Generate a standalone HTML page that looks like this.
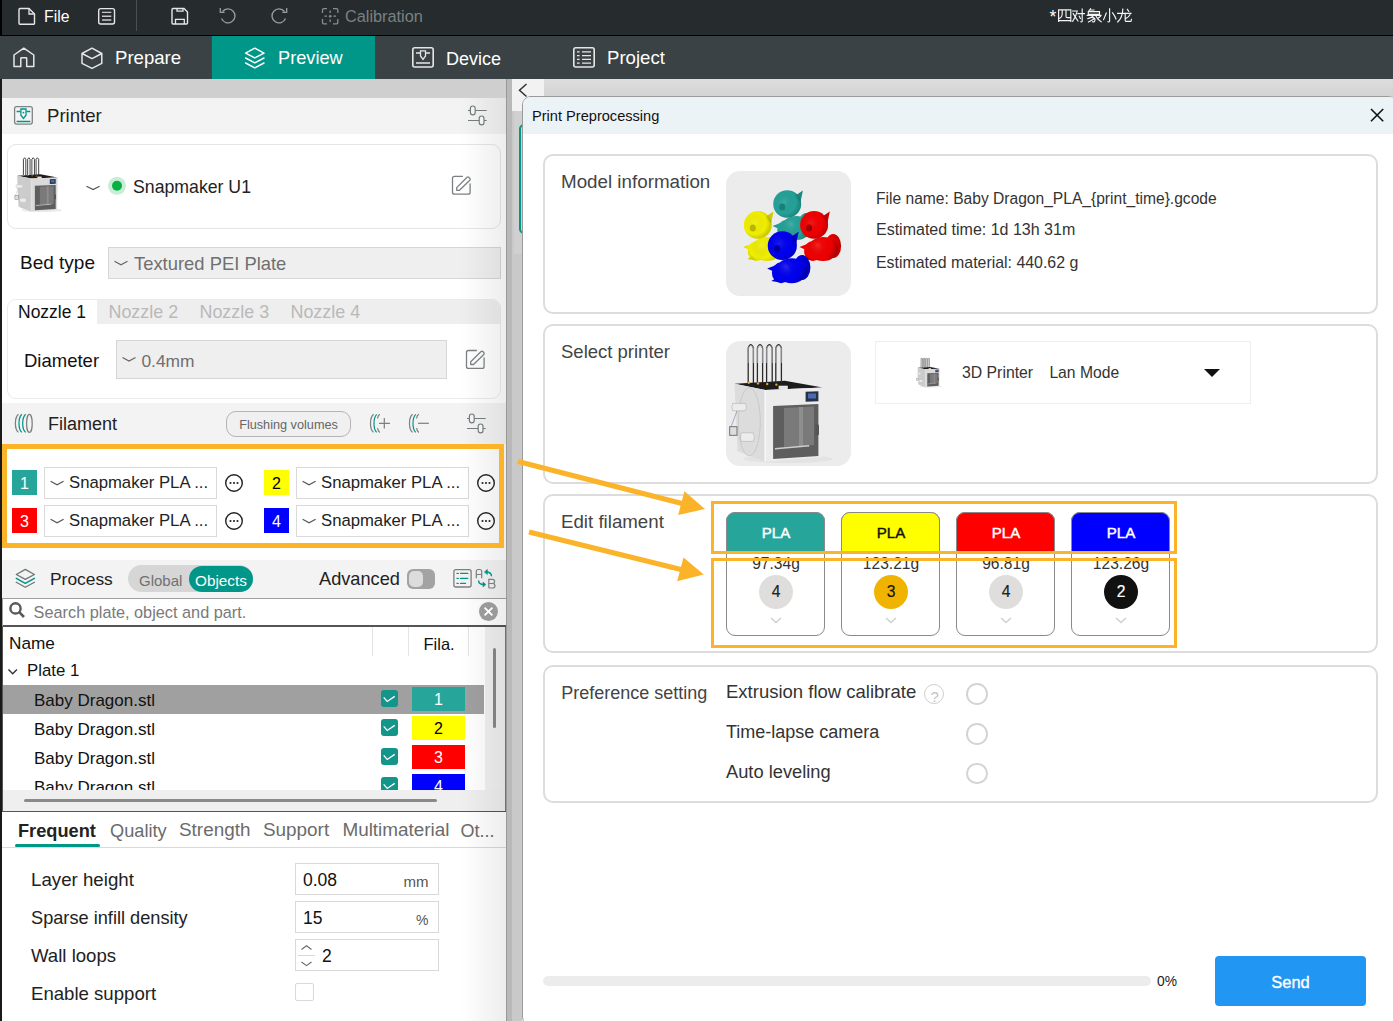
<!DOCTYPE html>
<html><head><meta charset="utf-8"><style>
*{margin:0;padding:0;box-sizing:border-box}
html,body{width:1393px;height:1021px;overflow:hidden}
body{position:relative;font-family:"Liberation Sans",sans-serif;background:#fff}
.a{position:absolute}
.t{position:absolute;line-height:1;white-space:nowrap}
</style></head><body>
<div class="a" style="left:0px;top:0px;width:1393px;height:35px;background:#262c2e"></div>
<div class="a" style="left:0px;top:35px;width:1393px;height:1px;background:#000"></div>
<div class="a" style="left:0px;top:0px;width:2px;height:35px;background:#000"></div>
<div class="a" style="left:0px;top:36px;width:1393px;height:43px;background:#3b4245"></div>
<div class="a" style="left:212px;top:36px;width:163px;height:43px;background:#009688"></div>
<div class="a" style="left:211px;top:36px;width:1px;height:43px;background:#454545"></div>
<div class="a" style="left:136px;top:0px;width:1px;height:31px;background:#4a4f51"></div>
<div class="t" style="left:44px;top:8.73px;font-size:15.8px;color:#fff;font-weight:normal;">File</div>
<div class="t" style="left:345px;top:7.80px;font-size:16.3px;color:#7b8081;font-weight:normal;">Calibration</div>
<div class="t" style="left:1049.5px;top:8.99px;font-size:17.5px;color:#fff;font-weight:normal;">*</div>
<div class="t" style="left:115px;top:49.06px;font-size:18.6px;color:#fff;font-weight:normal;">Prepare</div>
<div class="t" style="left:278px;top:49.39px;font-size:18.2px;color:#fff;font-weight:normal;">Preview</div>
<div class="t" style="left:446px;top:49.56px;font-size:18px;color:#fff;font-weight:normal;">Device</div>
<div class="t" style="left:607px;top:49.06px;font-size:18.6px;color:#fff;font-weight:normal;">Project</div>
<div class="a" style="left:0px;top:79px;width:506px;height:942px;background:#fff"></div>
<div class="a" style="left:0px;top:79px;width:2px;height:942px;background:#1a1a1a"></div>
<div class="a" style="left:2px;top:79px;width:504px;height:19px;background:#cfcfcf"></div>
<div class="a" style="left:506px;top:79px;width:1px;height:942px;background:#999"></div>
<div class="a" style="left:507px;top:79px;width:5px;height:942px;background:#b9b9b9"></div>
<div class="a" style="left:512px;top:79px;width:10px;height:942px;background:#c9c9c9"></div>
<div class="a" style="left:2px;top:98px;width:504px;height:36px;background:#f3f3f3"></div>
<div class="t" style="left:47px;top:107.06px;font-size:18.6px;color:#222;font-weight:normal;">Printer</div>
<div class="a" style="left:7px;top:144px;width:494px;height:85px;border:1px solid #e6e6e6;border-radius:9px;background:#fff"></div>
<div class="t" style="left:133px;top:178.82px;font-size:17.7px;color:#222;font-weight:normal;">Snapmaker U1</div>
<div class="t" style="left:20px;top:253.02px;font-size:19px;color:#111;font-weight:normal;">Bed type</div>
<div class="a" style="left:108px;top:247px;width:393px;height:32px;background:#efefef;border:1px solid #d6d6d6"></div>
<div class="t" style="left:134px;top:254.72px;font-size:18.4px;color:#707070;font-weight:normal;">Textured PEI Plate</div>
<div class="a" style="left:7px;top:299px;width:494px;height:100px;border:1px solid #ebebeb;border-radius:9px;background:#fff"></div>
<div class="a" style="left:97px;top:300px;width:403px;height:24px;background:#eeeeee;border-top-right-radius:8px"></div>
<div class="t" style="left:18px;top:303.99px;font-size:17.5px;color:#111;font-weight:normal;">Nozzle 1</div>
<div class="t" style="left:108.5px;top:303.65px;font-size:17.9px;color:#b9b9b9;font-weight:normal;">Nozzle 2</div>
<div class="t" style="left:199.5px;top:303.65px;font-size:17.9px;color:#b9b9b9;font-weight:normal;">Nozzle 3</div>
<div class="t" style="left:290.5px;top:303.65px;font-size:17.9px;color:#b9b9b9;font-weight:normal;">Nozzle 4</div>
<div class="t" style="left:24px;top:352.14px;font-size:18.5px;color:#111;font-weight:normal;">Diameter</div>
<div class="a" style="left:116px;top:340px;width:331px;height:39px;background:#efefef;border:1px solid #d6d6d6"></div>
<div class="t" style="left:141.4px;top:353.07px;font-size:17.4px;color:#707070;font-weight:normal;">0.4mm</div>
<div class="a" style="left:2px;top:403px;width:504px;height:41px;background:#f3f3f3"></div>
<div class="t" style="left:48px;top:415.06px;font-size:18px;color:#222;font-weight:normal;">Filament</div>
<div class="a" style="left:226px;top:411px;width:125px;height:26px;background:#f0f0f0;border:1px solid #b4b4b4;border-radius:10px"></div>
<div class="t" style="left:-11.5px;width:600px;text-align:center;top:418.55px;font-size:12.7px;color:#666;font-weight:normal;">Flushing volumes</div>
<div class="a" style="left:2px;top:444px;width:502px;height:104px;border:5px solid #fbb32a"></div>
<div class="a" style="left:12px;top:470px;width:25px;height:25px;background:#26a69a"></div>
<div class="t" style="left:-275.5px;width:600px;text-align:center;top:476.26px;font-size:16px;color:#fff;font-weight:normal;">1</div>
<div class="a" style="left:44px;top:467px;width:173px;height:32px;background:#fff;border:1px solid #d9d9d9"></div>
<div class="t" style="left:69px;top:475.26px;font-size:16.7px;color:#222;font-weight:normal;">Snapmaker PLA ...</div>
<div class="a" style="left:264px;top:470px;width:25px;height:25px;background:#ffff00"></div>
<div class="t" style="left:-23.5px;width:600px;text-align:center;top:476.26px;font-size:16px;color:#000;font-weight:normal;">2</div>
<div class="a" style="left:296px;top:467px;width:173px;height:32px;background:#fff;border:1px solid #d9d9d9"></div>
<div class="t" style="left:321px;top:475.26px;font-size:16.7px;color:#222;font-weight:normal;">Snapmaker PLA ...</div>
<div class="a" style="left:12px;top:508px;width:25px;height:25px;background:#ff0000"></div>
<div class="t" style="left:-275.5px;width:600px;text-align:center;top:514.26px;font-size:16px;color:#fff;font-weight:normal;">3</div>
<div class="a" style="left:44px;top:505px;width:173px;height:32px;background:#fff;border:1px solid #d9d9d9"></div>
<div class="t" style="left:69px;top:513.26px;font-size:16.7px;color:#222;font-weight:normal;">Snapmaker PLA ...</div>
<div class="a" style="left:264px;top:508px;width:25px;height:25px;background:#0000ff"></div>
<div class="t" style="left:-23.5px;width:600px;text-align:center;top:514.26px;font-size:16px;color:#fff;font-weight:normal;">4</div>
<div class="a" style="left:296px;top:505px;width:173px;height:32px;background:#fff;border:1px solid #d9d9d9"></div>
<div class="t" style="left:321px;top:513.26px;font-size:16.7px;color:#222;font-weight:normal;">Snapmaker PLA ...</div>
<div class="a" style="left:2px;top:560px;width:504px;height:38px;background:#f3f3f3"></div>
<div class="a" style="left:2px;top:598px;width:504px;height:1px;background:#a0a0a4"></div>
<div class="t" style="left:50px;top:570.67px;font-size:17.4px;color:#222;font-weight:normal;">Process</div>
<div class="a" style="left:128px;top:565px;width:125px;height:27px;background:#d6d6d6;border-radius:14px"></div>
<div class="a" style="left:189px;top:566px;width:64px;height:26px;background:#009688;border-radius:13px"></div>
<div class="t" style="left:139px;top:573.10px;font-size:15px;color:#707070;font-weight:normal;">Global</div>
<div class="t" style="left:195px;top:572.85px;font-size:15.3px;color:#fff;font-weight:normal;">Objects</div>
<div class="t" style="left:319px;top:570.39px;font-size:18.2px;color:#222;font-weight:normal;">Advanced</div>
<div class="a" style="left:407px;top:569px;width:28px;height:20px;background:#a3a3a3;border-radius:6px"></div>
<div class="a" style="left:409px;top:571px;width:14px;height:16px;background:#dcdcdc;border-radius:5px"></div>
<div class="a" style="left:2px;top:599px;width:504px;height:27px;background:#fff"></div>
<div class="a" style="left:2px;top:625px;width:504px;height:2px;background:#555"></div>
<div class="t" style="left:33.6px;top:604.00px;font-size:16.3px;color:#7a7a7a;font-weight:normal;">Search plate, object and part.</div>
<div class="a" style="left:2px;top:627px;width:504px;height:184px;background:#fff"></div>
<div class="a" style="left:505px;top:627px;width:1px;height:184px;background:#777"></div>
<div class="t" style="left:9px;top:635.24px;font-size:17.2px;color:#111;font-weight:normal;">Name</div>
<div class="t" style="left:423.5px;top:635.83px;font-size:16.5px;color:#111;font-weight:normal;">Fila.</div>
<div class="a" style="left:372px;top:627px;width:1px;height:29px;background:#e4e4e4"></div>
<div class="a" style="left:408px;top:627px;width:1px;height:29px;background:#e4e4e4"></div>
<div class="a" style="left:468px;top:627px;width:1px;height:29px;background:#e4e4e4"></div>
<div class="t" style="left:27px;top:663.18px;font-size:16.8px;color:#111;font-weight:normal;">Plate 1</div>
<div class="a" style="left:3px;top:685px;width:481px;height:29px;background:#a0a0a0"></div>
<div class="t" style="left:34px;top:692.41px;font-size:17px;color:#111;font-weight:normal;">Baby Dragon.stl</div>
<div class="t" style="left:34px;top:721.41px;font-size:17px;color:#111;font-weight:normal;">Baby Dragon.stl</div>
<div class="t" style="left:34px;top:750.41px;font-size:17px;color:#111;font-weight:normal;">Baby Dragon.stl</div>
<div class="t" style="left:34px;top:779.41px;font-size:17px;color:#111;font-weight:normal;">Baby Dragon.stl</div>
<div class="a" style="left:381px;top:690px;width:17px;height:17px;background:#13958a;border-radius:3px"></div>
<div class="a" style="left:412px;top:687px;width:53px;height:24px;background:#26a69a"></div>
<div class="t" style="left:138.5px;width:600px;text-align:center;top:692.26px;font-size:16px;color:#fff;font-weight:normal;">1</div>
<div class="a" style="left:381px;top:719px;width:17px;height:17px;background:#13958a;border-radius:3px"></div>
<div class="a" style="left:412px;top:716px;width:53px;height:24px;background:#ffff00"></div>
<div class="t" style="left:138.5px;width:600px;text-align:center;top:721.26px;font-size:16px;color:#000;font-weight:normal;">2</div>
<div class="a" style="left:381px;top:748px;width:17px;height:17px;background:#13958a;border-radius:3px"></div>
<div class="a" style="left:412px;top:745px;width:53px;height:24px;background:#ff0000"></div>
<div class="t" style="left:138.5px;width:600px;text-align:center;top:750.26px;font-size:16px;color:#fff;font-weight:normal;">3</div>
<div class="a" style="left:381px;top:777px;width:17px;height:17px;background:#13958a;border-radius:3px"></div>
<div class="a" style="left:412px;top:774px;width:53px;height:24px;background:#0000ff"></div>
<div class="t" style="left:138.5px;width:600px;text-align:center;top:779.26px;font-size:16px;color:#fff;font-weight:normal;">4</div>
<div class="a" style="left:485px;top:627px;width:20px;height:163px;background:#f0f0f0"></div>
<div class="a" style="left:3px;top:790px;width:502px;height:21px;background:#efefef"></div>
<div class="a" style="left:24px;top:799px;width:413px;height:3px;background:#8a8a8a;border-radius:2px"></div>
<div class="a" style="left:493px;top:648px;width:3px;height:80px;background:#888;border-radius:2px"></div>
<div class="a" style="left:2px;top:811px;width:504px;height:1px;background:#555"></div>
<div class="a" style="left:2px;top:598px;width:1px;height:28px;background:#a0a0a4"></div>
<div class="a" style="left:2px;top:626px;width:1px;height:186px;background:#555"></div>
<div class="t" style="left:18px;top:821.99px;font-size:18.2px;color:#222;font-weight:bold;">Frequent</div>
<div class="t" style="left:110px;top:821.99px;font-size:18.2px;color:#6b6b6b;font-weight:normal;">Quality</div>
<div class="t" style="left:179px;top:821.40px;font-size:18.9px;color:#6b6b6b;font-weight:normal;">Strength</div>
<div class="t" style="left:263px;top:821.40px;font-size:18.9px;color:#6b6b6b;font-weight:normal;">Support</div>
<div class="t" style="left:342.4px;top:821.40px;font-size:18.9px;color:#6b6b6b;font-weight:normal;">Multimaterial</div>
<div class="t" style="left:460.5px;top:822.16px;font-size:18px;color:#6b6b6b;font-weight:normal;">Ot...</div>
<div class="a" style="left:15px;top:844px;width:85px;height:3px;background:#009688;border-radius:2px"></div>
<div class="a" style="left:2px;top:847px;width:504px;height:1px;background:#d9d9d9"></div>
<div class="t" style="left:31px;top:870.77px;font-size:18.7px;color:#222;font-weight:normal;">Layer height</div>
<div class="a" style="left:295px;top:863px;width:144px;height:32px;background:#fff;border:1px solid #d9d9d9"></div>
<div class="t" style="left:303px;top:871.79px;font-size:17.5px;color:#111;font-weight:normal;">0.08</div>
<div class="t" style="right:964.5px;top:874.40px;font-size:15px;color:#555;font-weight:normal;">mm</div>
<div class="t" style="left:31px;top:909.19px;font-size:18.2px;color:#222;font-weight:normal;">Sparse infill density</div>
<div class="a" style="left:295px;top:901px;width:144px;height:32px;background:#fff;border:1px solid #d9d9d9"></div>
<div class="t" style="left:303px;top:909.79px;font-size:17.5px;color:#111;font-weight:normal;">15</div>
<div class="t" style="right:964.5px;top:913.25px;font-size:14px;color:#555;font-weight:normal;">%</div>
<div class="t" style="left:31px;top:946.86px;font-size:18.6px;color:#222;font-weight:normal;">Wall loops</div>
<div class="a" style="left:295px;top:939px;width:144px;height:32px;background:#fff;border:1px solid #d9d9d9"></div>
<div class="t" style="left:322px;top:947.79px;font-size:17.5px;color:#111;font-weight:normal;">2</div>
<div class="t" style="left:31px;top:984.86px;font-size:18.6px;color:#222;font-weight:normal;">Enable support</div>
<div class="a" style="left:295px;top:983px;width:19px;height:18px;border:1px solid #d9d9d9;border-radius:2px"></div>
<div class="a" style="left:512px;top:79px;width:881px;height:18px;background:linear-gradient(#dedede,#d2d2d2)"></div>
<div class="a" style="left:512px;top:79px;width:32px;height:32px;background:#f2f2f2"></div>
<div class="a" style="left:514px;top:111px;width:8px;height:143px;background:#d0d0d0"></div>
<div class="a" style="left:519px;top:124px;width:10px;height:110px;border:2px solid #009688;border-radius:5px"></div>
<svg class="a" style="left:512px;top:79px;" width="30" height="25" viewBox="0 0 30 25"><path d="M14.5 5L7.5 11.2L14.5 17.5M18 17.5L21.2 20.5" stroke="#333" stroke-width="1.5" fill="none"/></svg>
<div class="a" style="left:461px;top:98px;width:45px;height:923px;background:linear-gradient(to right,rgba(0,0,0,0),rgba(0,0,0,0.07))"></div>
<div class="a" style="left:2px;top:444px;width:502px;height:104px;border:5px solid #fbb32a"></div>
<div class="a" style="left:522px;top:96px;width:875px;height:930px;background:#fff;border-radius:9px;border:1px solid #9a9a9a;overflow:hidden"></div>
<div class="a" style="left:523px;top:97px;width:874px;height:37px;background:#ecf3f7;border-radius:8px 8px 0 0"></div>
<div class="t" style="left:532px;top:109.44px;font-size:14.6px;color:#111;font-weight:normal;">Print Preprocessing</div>
<div class="a" style="left:543px;top:154px;width:835px;height:160px;border:2.5px solid #dcdcdc;border-radius:10px;background:#fff"></div>
<div class="a" style="left:543px;top:324px;width:835px;height:160px;border:2.5px solid #dcdcdc;border-radius:10px;background:#fff"></div>
<div class="a" style="left:543px;top:494px;width:835px;height:159px;border:2.5px solid #dcdcdc;border-radius:10px;background:#fff"></div>
<div class="a" style="left:543px;top:665px;width:835px;height:138px;border:2.5px solid #dcdcdc;border-radius:10px;background:#fff"></div>
<div class="t" style="left:561px;top:172.89px;font-size:18.8px;color:#444;font-weight:normal;">Model information</div>
<div class="t" style="left:561px;top:343.34px;font-size:18.5px;color:#444;font-weight:normal;">Select printer</div>
<div class="t" style="left:561px;top:512.67px;font-size:18.7px;color:#444;font-weight:normal;">Edit filament</div>
<div class="t" style="left:561.3px;top:683.56px;font-size:18px;color:#444;font-weight:normal;">Preference setting</div>
<div class="a" style="left:726px;top:171px;width:125px;height:125px;background:#ececec;border-radius:14px"></div>
<div class="t" style="left:876px;top:190.99px;font-size:15.6px;color:#333;font-weight:normal;">File name: Baby Dragon_PLA_{print_time}.gcode</div>
<div class="t" style="left:876px;top:222.26px;font-size:16px;color:#333;font-weight:normal;">Estimated time: 1d 13h 31m</div>
<div class="t" style="left:876px;top:255.04px;font-size:15.9px;color:#333;font-weight:normal;">Estimated material: 440.62 g</div>
<div class="a" style="left:726px;top:341px;width:125px;height:125px;background:#ececec;border-radius:14px"></div>
<div class="a" style="left:875px;top:341px;width:376px;height:63px;border:1px solid #eeeeee"></div>
<div class="t" style="left:962px;top:364.93px;font-size:15.8px;color:#333;font-weight:normal;">3D Printer</div>
<div class="t" style="left:1049.4px;top:365.01px;font-size:15.7px;color:#333;font-weight:normal;">Lan Mode</div>
<svg class="a" style="left:1204px;top:369px;" width="16" height="8" viewBox="0 0 16 8"><path d="M0 0H16L8 8Z" fill="#111"/></svg>
<div class="a" style="left:726px;top:512px;width:99px;height:124px;border:1px solid #8a8a8a;border-radius:9px;background:#fff;overflow:hidden"></div>
<div class="a" style="left:726px;top:512px;width:99px;height:40px;background:#26a69a;border:1px solid #8a8a8a;border-bottom:none;border-radius:9px 9px 0 0"></div>
<div class="t" style="left:476px;width:600px;text-align:center;top:524.70px;font-size:15px;color:#fff;font-weight:normal;-webkit-text-stroke:0.45px #fff">PLA</div>
<div class="t" style="left:476px;width:600px;text-align:center;top:555.59px;font-size:15.6px;color:#333;font-weight:normal;">97.34g</div>
<div class="a" style="left:758.5px;top:575px;width:34px;height:34px;background:#e0dedd;border-radius:50%"></div>
<div class="t" style="left:476px;width:600px;text-align:center;top:584.19px;font-size:15.6px;color:#222;font-weight:normal;-webkit-text-stroke:0.2px #222">4</div>
<svg class="a" style="left:770px;top:617px;" width="12" height="7" viewBox="0 0 12 7"><path d="M1 1L6 5.5L11 1" stroke="#d0d0d0" stroke-width="1.6" fill="none"/></svg>
<div class="a" style="left:841px;top:512px;width:99px;height:124px;border:1px solid #8a8a8a;border-radius:9px;background:#fff;overflow:hidden"></div>
<div class="a" style="left:841px;top:512px;width:99px;height:40px;background:#ffff00;border:1px solid #8a8a8a;border-bottom:none;border-radius:9px 9px 0 0"></div>
<div class="t" style="left:591px;width:600px;text-align:center;top:524.70px;font-size:15px;color:#111;font-weight:normal;-webkit-text-stroke:0.45px #111">PLA</div>
<div class="t" style="left:591px;width:600px;text-align:center;top:555.59px;font-size:15.6px;color:#333;font-weight:normal;">123.21g</div>
<div class="a" style="left:873.5px;top:575px;width:34px;height:34px;background:#f0b400;border-radius:50%"></div>
<div class="t" style="left:591px;width:600px;text-align:center;top:584.19px;font-size:15.6px;color:#111;font-weight:normal;-webkit-text-stroke:0.2px #111">3</div>
<svg class="a" style="left:885px;top:617px;" width="12" height="7" viewBox="0 0 12 7"><path d="M1 1L6 5.5L11 1" stroke="#d0d0d0" stroke-width="1.6" fill="none"/></svg>
<div class="a" style="left:956px;top:512px;width:99px;height:124px;border:1px solid #8a8a8a;border-radius:9px;background:#fff;overflow:hidden"></div>
<div class="a" style="left:956px;top:512px;width:99px;height:40px;background:#ff0000;border:1px solid #8a8a8a;border-bottom:none;border-radius:9px 9px 0 0"></div>
<div class="t" style="left:706px;width:600px;text-align:center;top:524.70px;font-size:15px;color:#fff;font-weight:normal;-webkit-text-stroke:0.45px #fff">PLA</div>
<div class="t" style="left:706px;width:600px;text-align:center;top:555.59px;font-size:15.6px;color:#333;font-weight:normal;">96.81g</div>
<div class="a" style="left:988.5px;top:575px;width:34px;height:34px;background:#e0dedd;border-radius:50%"></div>
<div class="t" style="left:706px;width:600px;text-align:center;top:584.19px;font-size:15.6px;color:#222;font-weight:normal;-webkit-text-stroke:0.2px #222">4</div>
<svg class="a" style="left:1000px;top:617px;" width="12" height="7" viewBox="0 0 12 7"><path d="M1 1L6 5.5L11 1" stroke="#d0d0d0" stroke-width="1.6" fill="none"/></svg>
<div class="a" style="left:1071px;top:512px;width:99px;height:124px;border:1px solid #8a8a8a;border-radius:9px;background:#fff;overflow:hidden"></div>
<div class="a" style="left:1071px;top:512px;width:99px;height:40px;background:#0000ff;border:1px solid #8a8a8a;border-bottom:none;border-radius:9px 9px 0 0"></div>
<div class="t" style="left:821px;width:600px;text-align:center;top:524.70px;font-size:15px;color:#fff;font-weight:normal;-webkit-text-stroke:0.45px #fff">PLA</div>
<div class="t" style="left:821px;width:600px;text-align:center;top:555.59px;font-size:15.6px;color:#333;font-weight:normal;">123.26g</div>
<div class="a" style="left:1103.5px;top:575px;width:34px;height:34px;background:#111;border-radius:50%"></div>
<div class="t" style="left:821px;width:600px;text-align:center;top:584.19px;font-size:15.6px;color:#fff;font-weight:normal;-webkit-text-stroke:0.2px #fff">2</div>
<svg class="a" style="left:1115px;top:617px;" width="12" height="7" viewBox="0 0 12 7"><path d="M1 1L6 5.5L11 1" stroke="#d0d0d0" stroke-width="1.6" fill="none"/></svg>
<div class="a" style="left:711px;top:501px;width:466px;height:53px;border:3px solid #fbb32a"></div>
<div class="a" style="left:711px;top:558px;width:466px;height:90px;border:3px solid #fbb32a"></div>
<div class="t" style="left:726px;top:683.34px;font-size:18.5px;color:#333;font-weight:normal;">Extrusion flow calibrate</div>
<div class="a" style="left:966px;top:683.3px;width:21.5px;height:21.5px;border:2px solid #d4d4d4;border-radius:50%"></div>
<div class="t" style="left:726px;top:723.36px;font-size:18px;color:#333;font-weight:normal;">Time-lapse camera</div>
<div class="a" style="left:966px;top:723.0px;width:21.5px;height:21.5px;border:2px solid #d4d4d4;border-radius:50%"></div>
<div class="t" style="left:726px;top:762.71px;font-size:18.3px;color:#333;font-weight:normal;">Auto leveling</div>
<div class="a" style="left:966px;top:762.6999999999999px;width:21.5px;height:21.5px;border:2px solid #d4d4d4;border-radius:50%"></div>
<div class="a" style="left:924.4px;top:684.4px;width:20px;height:20px;border:1.5px solid #cfcfcf;border-radius:50%"></div>
<div class="t" style="left:634.6px;width:600px;text-align:center;top:688.60px;font-size:15px;color:#c4c4c4;font-weight:normal;">?</div>
<div class="a" style="left:543px;top:976px;width:608px;height:10px;background:#ececec;border-radius:5px"></div>
<div class="t" style="left:1157px;top:975.42px;font-size:13.8px;color:#222;font-weight:normal;">0%</div>
<div class="a" style="left:1215px;top:956px;width:151px;height:50px;background:#2196f3;border-radius:4px"></div>
<div class="t" style="left:990.5px;width:600px;text-align:center;top:974.43px;font-size:16.5px;color:#fff;font-weight:normal;-webkit-text-stroke:0.35px #fff">Send</div>
<svg class="a" style="left:0px;top:0px;" width="1393" height="1021" viewBox="0 0 1393 1021"><g stroke="#fbb32a" stroke-width="5" fill="none"><path d="M518 461.5L684 504"/><path d="M529 532L683 570"/></g>
<path d="M705 509L684.4 491.2L678.2 514.9Z" fill="#fbb32a"/><path d="M703.7 574.6L683.5 557.5L677.1 581.2Z" fill="#fbb32a"/></svg>
<svg class="a" style="left:0;top:0" width="1393" height="1021" viewBox="0 0 1393 1021"><path d="M19 9.5Q19 8.5 20 8.5H29L34.5 14V23.5Q34.5 24.2 33.8 24.2H20Q19 24.2 19 23.3Z" stroke="#e6e6e6" stroke-width="1.4" fill="none" stroke-linejoin="round"/><path d="M29 8.5V14H34.5" stroke="#e6e6e6" stroke-width="1.3" fill="none"/><rect x="98.7" y="8.6" width="15.8" height="15.4" rx="2" stroke="#e6e6e6" stroke-width="1.4" fill="none"/><path d="M102 12.4H111.3M102 16.2H111.3M102 20H111.3" stroke="#c8c8c8" stroke-width="1.4"/><path d="M172 9.5Q172 8.5 173 8.5H184L187.5 12V23Q187.5 24 186.5 24H173Q172 24 172 23Z" stroke="#e6e6e6" stroke-width="1.4" fill="none"/><path d="M177 8.8V11.2H183V8.8M175.5 24V19.3H184.3V24" stroke="#e6e6e6" stroke-width="1.3" fill="none"/><path d="M221.5 18.5A7 7 0 1 0 222.5 11.5" stroke="#9a9c9c" stroke-width="1.3" fill="none"/><path d="M220.3 8V12.3H224.6" stroke="#9a9c9c" stroke-width="1.3" fill="none"/><path d="M285.5 18.5A7 7 0 1 1 284.5 11.5" stroke="#9a9c9c" stroke-width="1.3" fill="none"/><path d="M286.7 8V12.3H282.4" stroke="#9a9c9c" stroke-width="1.3" fill="none"/><g stroke="#8a8d8e" stroke-width="1.3" fill="none"><path d="M322.5 13V9.8Q322.5 8.6 323.7 8.6H327M333 8.6H336.5Q337.8 8.6 337.8 9.8V13M337.8 19V22.6Q337.8 23.8 336.5 23.8H333M327 23.8H323.7Q322.5 23.8 322.5 22.6V19"/><path d="M330.2 10.5V13M330.2 19.5V22M324.5 16.2H327M333.4 16.2H336"/></g><circle cx="330.2" cy="16.2" r="1.3" fill="#8a8d8e"/><path d="M14 55L23.8 48.2L33.8 55V66.4H26.7V58.5Q26.7 57.8 26 57.8H21.5Q20.8 57.8 20.8 58.5V66.4H14Z" stroke="#e6e6e6" stroke-width="1.5" fill="none" stroke-linejoin="round"/><path d="M92 48.2L101.8 53.5V63.3L92 68.4L82 63.3V53.5Z M82 53.5L92 58.6L101.8 53.5" stroke="#e6e6e6" stroke-width="1.5" fill="none" stroke-linejoin="round"/><path d="M254.8 48.2L264 53.1L254.8 57.9L245.6 53.1Z M245.6 58L254.8 62.9L264 58 M245.6 63L254.8 67.9L264 63" stroke="#fff" stroke-width="1.5" fill="none" stroke-linejoin="round" stroke-linecap="round"/><rect x="412.8" y="47.8" width="20.4" height="19.2" rx="2" stroke="#e6e6e6" stroke-width="1.6" fill="none"/><path d="M416 53H420.2M425.8 53H430M416 63H430" stroke="#e6e6e6" stroke-width="1.5"/><path d="M420.5 50.8H425.5V56L423 59.5L420.5 56Z" stroke="#e6e6e6" stroke-width="1.3" fill="none"/><rect x="573.8" y="47.8" width="20.4" height="19.2" rx="2" stroke="#e6e6e6" stroke-width="1.6" fill="none"/><path d="M577 51.8H579.6M582 51.8H591M577 55.6H579.6M582 55.6H591M577 59.4H579.6M582 59.4H591M577 63.1H579.6M582 63.1H591" stroke="#e6e6e6" stroke-width="1.3"/><rect x="14.6" y="106.6" width="17.7" height="17.5" rx="2" stroke="#7d8485" stroke-width="1.3" fill="none"/><path d="M16.6 111.5H20.5M26.5 111.5H30.3M16.6 121.5H30.3" stroke="#009688" stroke-width="1.3"/><path d="M20.9 109H26V115.2L23.45 118.5L20.9 115.2Z" stroke="#009688" stroke-width="1.3" fill="none"/><circle cx="23.45" cy="112.6" r="0.9" fill="#009688"/><g stroke="#737b7c" stroke-width="1.2" fill="none"><path d="M468 110.5H486.7M468 120.5H486.7"/><rect x="470.4" y="106" width="4.8" height="8.8" rx="2.4" fill="#f3f3f3"/><rect x="479.2" y="116" width="4.8" height="8.8" rx="2.4" fill="#f3f3f3"/></g><g stroke="#737b7c" stroke-width="1.2" fill="none"><path d="M467 418.5H485.7M467 428.5H485.7"/><rect x="469.4" y="414" width="4.8" height="8.8" rx="2.4" fill="#f3f3f3"/><rect x="478.2" y="424" width="4.8" height="8.8" rx="2.4" fill="#f3f3f3"/></g><path d="M86.5 186.2L93.1 189.6L99.6 186.2" stroke="#555" stroke-width="1.2" fill="none"/><circle cx="117" cy="185.8" r="9" fill="#c9ecd6"/><circle cx="117" cy="185.8" r="5" fill="#06b044"/><g stroke="#7a8081" stroke-width="1.3" fill="none" stroke-linejoin="round"><path d="M462.9 176.3H454.5Q452.5 176.3 452.5 178.3V192.20000000000002Q452.5 194.20000000000002 454.5 194.20000000000002H468.1Q470.1 194.20000000000002 470.1 192.20000000000002V183.4"/><path d="M456.7 190.3V187.60000000000002L467.1 177.3Q468.0 176.5 468.9 177.3L469.9 178.5Q470.6 179.4 469.8 180.3L459.5 190.3Z"/></g><g stroke="#7a8081" stroke-width="1.3" fill="none" stroke-linejoin="round"><path d="M476.9 350.5H468.5Q466.5 350.5 466.5 352.5V366.4Q466.5 368.4 468.5 368.4H482.1Q484.1 368.4 484.1 366.4V357.6"/><path d="M470.7 364.5V361.8L481.1 351.5Q482.0 350.7 482.9 351.5L483.9 352.7Q484.6 353.6 483.8 354.5L473.5 364.5Z"/></g><path d="M114.5 261.3L121.0 264.8L127.5 261.3" stroke="#666" stroke-width="1.2" fill="none"/><path d="M122.5 357.5L129.0 361.0L135.5 357.5" stroke="#666" stroke-width="1.2" fill="none"/><path d="M50.6 481.2L57.1 484.7L63.6 481.2" stroke="#555" stroke-width="1.2" fill="none"/><path d="M302.6 481.2L309.1 484.7L315.6 481.2" stroke="#555" stroke-width="1.2" fill="none"/><path d="M50.6 519.2L57.1 522.7L63.6 519.2" stroke="#555" stroke-width="1.2" fill="none"/><path d="M302.6 519.2L309.1 522.7L315.6 519.2" stroke="#555" stroke-width="1.2" fill="none"/><circle cx="234" cy="483" r="8.3" stroke="#222" stroke-width="1.4" fill="none"/><circle cx="230.5" cy="483" r="1.05" fill="#222"/><circle cx="234" cy="483" r="1.05" fill="#222"/><circle cx="237.5" cy="483" r="1.05" fill="#222"/><circle cx="486" cy="483" r="8.3" stroke="#222" stroke-width="1.4" fill="none"/><circle cx="482.5" cy="483" r="1.05" fill="#222"/><circle cx="486" cy="483" r="1.05" fill="#222"/><circle cx="489.5" cy="483" r="1.05" fill="#222"/><circle cx="234" cy="521" r="8.3" stroke="#222" stroke-width="1.4" fill="none"/><circle cx="230.5" cy="521" r="1.05" fill="#222"/><circle cx="234" cy="521" r="1.05" fill="#222"/><circle cx="237.5" cy="521" r="1.05" fill="#222"/><circle cx="486" cy="521" r="8.3" stroke="#222" stroke-width="1.4" fill="none"/><circle cx="482.5" cy="521" r="1.05" fill="#222"/><circle cx="486" cy="521" r="1.05" fill="#222"/><circle cx="489.5" cy="521" r="1.05" fill="#222"/><g stroke-width="1.25" fill="none"><path d="M18.4 414.3Q15.4 417 15.4 423.4Q15.4 429.8 18.4 432.4" stroke="#7a7f80"/><path d="M21.8 414.3Q19 417 19 423.4Q19 429.8 21.8 432.4" stroke="#009688"/><path d="M25.6 414.3Q22.7 417 22.7 423.4Q22.7 429.8 25.6 432.4" stroke="#009688"/><ellipse cx="29.4" cy="423.4" rx="2.8" ry="9" stroke="#7a7f80"/></g><g stroke-width="1.2" fill="none"><path d="M373.5 414.3Q370.5 417 370.5 423.4Q370.5 429.8 373.5 432.4" stroke="#7a7f80"/><path d="M376.7 414.3Q374 417 374 423.4Q374 429.8 376.7 432.4" stroke="#009688"/><path d="M379.8 414.3Q377.8 415.5 377.6 418.5M377.6 428Q377.8 431 379.8 432.4" stroke="#7a7f80"/><path d="M379 423.3H389.9M384.3 418V428.6" stroke="#7a7f80"/></g><g stroke-width="1.2" fill="none"><path d="M412.5 414.3Q409.5 417 409.5 423.4Q409.5 429.8 412.5 432.4" stroke="#7a7f80"/><path d="M415.7 414.3Q413 417 413 423.4Q413 429.8 415.7 432.4" stroke="#009688"/><path d="M418.8 414.3Q416.8 415.5 416.6 418.5M416.6 428Q416.8 431 418.8 432.4" stroke="#7a7f80"/><path d="M418 423.3H428.9" stroke="#7a7f80"/></g><g stroke-width="1.3" fill="none" stroke-linejoin="round" stroke-linecap="round"><path d="M25.3 569.4L34.4 574.5L25.3 579.4L16.3 574.5Z" stroke="#6f7677"/><path d="M16.3 578.3L25.3 583.3L34.4 578.3" stroke="#009688" stroke-width="1.5"/><path d="M16.3 582.2L25.3 587.2L34.4 582.2" stroke="#6f7677"/></g><rect x="453.9" y="569.6" width="17.2" height="17.4" rx="2" stroke="#7a7f80" stroke-width="1.3" fill="none"/><g stroke="#009688" stroke-width="1.3" stroke-linecap="round"><path d="M457 573.4H458.2M460.5 573.4H467.8M457 578.4H458.2M460.5 578.4H467.8M457 583.4H458.2M460.5 583.4H465.5"/></g><path d="M476.3 578.2V571.5Q476.3 569.5 478.3 569.5H479.7Q481.7 569.5 481.7 571.5V578.2M476.3 574.5H481.7" stroke="#7a7f80" stroke-width="1.2" fill="none"/><path d="M488.8 588V579.4H492.5Q494.6 579.4 494.6 581.4Q494.6 583.5 492.5 583.5H488.8M492.5 583.5Q495 583.5 495 585.8Q495 588 492.5 588H488.8" stroke="#7a7f80" stroke-width="1.2" fill="none"/><path d="M491.5 576.2Q491.5 572 486 572" stroke="#009688" stroke-width="1.4" fill="none"/><path d="M484.5 572L487.3 569.6V574.4Z" fill="#009688" stroke="#009688" stroke-width="0.8"/><path d="M478.6 580.5Q478.6 584.5 484 584.5" stroke="#009688" stroke-width="1.4" fill="none"/><path d="M485.8 584.5L483 582.2V586.8Z" fill="#009688" stroke="#009688" stroke-width="0.8"/><circle cx="15.5" cy="608.4" r="5.1" stroke="#595959" stroke-width="2.4" fill="none"/><path d="M19.2 612.2L24 617" stroke="#595959" stroke-width="2.6"/><circle cx="488.5" cy="611.5" r="9.5" fill="#9a9a9a"/><path d="M484.6 607.6L492.4 615.4M492.4 607.6L484.6 615.4" stroke="#fff" stroke-width="1.8"/><path d="M8.5 669.5L12.7 673.8L16.9 669.5" stroke="#333" stroke-width="1.4" fill="none"/><path d="M383.7 697.4L387.2 701.5L394.7 696.4" stroke="#fff" stroke-width="1.3" fill="none"/><path d="M383.7 726.4L387.2 730.5L394.7 725.4" stroke="#fff" stroke-width="1.3" fill="none"/><path d="M383.7 755.4L387.2 759.5L394.7 754.4" stroke="#fff" stroke-width="1.3" fill="none"/><path d="M383.7 784.4L387.2 788.5L394.7 783.4" stroke="#fff" stroke-width="1.3" fill="none"/><path d="M301.5 949.5L306.5 945.8L311.5 949.5M301.5 962L306.5 965.6L311.5 962" stroke="#6a6a6a" stroke-width="1.1" fill="none"/><path d="M298 955.5H315" stroke="#d8d8d8" stroke-width="1"/><path d="M1371 109L1383.2 121.2M1383.2 109L1371 121.2" stroke="#111" stroke-width="1.6"/><defs><g id="pr">
<ellipse cx="62" cy="118" rx="45" ry="4" fill="#dedede" opacity="0.6"/>
<path d="M8.6 42.8L39.2 49L96.7 46.5L58.8 39.8Z" fill="#1c1c1c"/>
<path d="M8.6 42.8L39.2 49V120.6L11.6 110.2Z" fill="#dcdcdc"/>
<path d="M39.2 49L96.7 46.5L95.5 116.3L39.2 120.6Z" fill="#ececec"/>
<path d="M39.2 49V120.6" stroke="#f8f8f8" stroke-width="1.5"/>
<ellipse cx="23.3" cy="80.8" rx="11" ry="34" fill="none" stroke="#c4c4c4" stroke-width="0.8"/>
<path d="M47.1 64.9L92.4 63V115L47.1 118.1Z" fill="#5e5e5e"/>
<path d="M58 67L88 65.5V104L58 106Z" fill="#7a7a7a"/>
<path d="M75 66V105" stroke="#8e8e8e" stroke-width="4"/>
<path d="M49 107.7L83.2 104.7" stroke="#cfcfcf" stroke-width="1.6"/>
<path d="M79.6 50.8L92.4 50.2V60.2L79.6 60.8Z" fill="#26324a"/>
<rect x="82" y="52.5" width="8" height="5" fill="#4a6ab0"/>
<rect x="89.4" y="83.2" width="3.6" height="11" rx="1.5" fill="#555"/>
<path d="M6.7 62.4H19.4Q21.4 66.1 19.4 69.8H6.7Q4.9 66.1 6.7 62.4Z" fill="#ececec" stroke="#b8b8b8" stroke-width="0.7"/>
<path d="M15.3 91.8H27.4Q29.4 96.1 27.4 100.4H15.3Q13.5 96.1 15.3 91.8Z" fill="#ececec" stroke="#b8b8b8" stroke-width="0.7"/>
<path d="M11 70L5 86" stroke="#5a6aa0" stroke-width="0.5"/>
<rect x="3.7" y="85.7" width="7.3" height="8.6" fill="#ddd" stroke="#666" stroke-width="0.9"/>
<rect x="52.6" y="44.7" width="9.2" height="3.7" fill="#e6e6e6"/>
<g fill="none" stroke-width="1.3">
<path d="M22.2 42V7Q24.8 0.5 27.4 7V42" stroke="#2a2a2a"/>
<path d="M31.4 42V7Q34 0.5 36.6 7V42" stroke="#2a2a2a"/>
<path d="M40.6 42V7Q43.4 0.5 46.2 7V42" stroke="#2a2a2a"/>
<path d="M49.8 42V7Q52.6 0.5 55.4 7V42" stroke="#2a2a2a"/>
</g>
<g fill="none" stroke-width="0.6" stroke="#d8dbe4">
<path d="M22.2 22V7Q24.8 2 27.4 7V22M31.4 22V7Q34 2 36.6 7V22M40.6 22V7Q43.4 2 46.2 7V22M49.8 22V7Q52.6 2 55.4 7V22"/>
</g>
<g fill="#e8a020"><circle cx="22.8" cy="41.8" r="1.2"/><circle cx="32" cy="42.4" r="1.2"/><circle cx="41.2" cy="43" r="1.2"/><circle cx="50.4" cy="43.6" r="1.2"/></g>
</g><g id="prs">
<ellipse cx="62" cy="118" rx="45" ry="4" fill="#dedede" opacity="0.6"/>
<path d="M8.6 42.8L39.2 49L96.7 46.5L58.8 39.8Z" fill="#1c1c1c"/>
<path d="M8.6 42.8L39.2 49V120.6L11.6 110.2Z" fill="#cccccc"/>
<path d="M39.2 49L96.7 46.5L95.5 116.3L39.2 120.6Z" fill="#dadada"/>
<path d="M39.2 49V120.6" stroke="#e0e0e0" stroke-width="1.5"/>
<ellipse cx="23.3" cy="80.8" rx="11" ry="34" fill="none" stroke="#c4c4c4" stroke-width="0.8"/>
<path d="M47.1 64.9L92.4 63V115L47.1 118.1Z" fill="#5e5e5e"/>
<path d="M58 67L88 65.5V104L58 106Z" fill="#7a7a7a"/>
<path d="M75 66V105" stroke="#8e8e8e" stroke-width="4"/>
<path d="M49 107.7L83.2 104.7" stroke="#cfcfcf" stroke-width="1.6"/>
<path d="M79.6 50.8L92.4 50.2V60.2L79.6 60.8Z" fill="#26324a"/>
<rect x="82" y="52.5" width="8" height="5" fill="#4a6ab0"/>
<rect x="89.4" y="83.2" width="3.6" height="11" rx="1.5" fill="#555"/>
<path d="M6.7 62.4H19.4Q21.4 66.1 19.4 69.8H6.7Q4.9 66.1 6.7 62.4Z" fill="#ececec" stroke="#b8b8b8" stroke-width="0.7"/>
<path d="M15.3 91.8H27.4Q29.4 96.1 27.4 100.4H15.3Q13.5 96.1 15.3 91.8Z" fill="#ececec" stroke="#b8b8b8" stroke-width="0.7"/>
<path d="M11 70L5 86" stroke="#5a6aa0" stroke-width="0.5"/>
<rect x="3.7" y="85.7" width="7.3" height="8.6" fill="#ddd" stroke="#666" stroke-width="0.9"/>
<rect x="52.6" y="44.7" width="9.2" height="3.7" fill="#e6e6e6"/>
<g fill="none" stroke-width="1.9">
<path d="M22.2 42V7Q24.8 0.5 27.4 7V42" stroke="#2a2a2a"/>
<path d="M31.4 42V7Q34 0.5 36.6 7V42" stroke="#2a2a2a"/>
<path d="M40.6 42V7Q43.4 0.5 46.2 7V42" stroke="#2a2a2a"/>
<path d="M49.8 42V7Q52.6 0.5 55.4 7V42" stroke="#2a2a2a"/>
</g>
<g fill="none" stroke-width="0" stroke="none">
<path d="M22.2 22V7Q24.8 2 27.4 7V22M31.4 22V7Q34 2 36.6 7V22M40.6 22V7Q43.4 2 46.2 7V22M49.8 22V7Q52.6 2 55.4 7V22"/>
</g>
<g fill="#e8a020"><circle cx="22.8" cy="41.8" r="1.2"/><circle cx="32" cy="42.4" r="1.2"/><circle cx="41.2" cy="43" r="1.2"/><circle cx="50.4" cy="43.6" r="1.2"/></g>
</g></defs><use href="#pr" transform="translate(726 341)"/><use href="#prs" transform="translate(13.2 156) scale(0.46)"/><use href="#prs" transform="translate(915.5 357) scale(0.25)"/><defs><radialGradient id="shd" gradientUnits="userSpaceOnUse" cx="-3" cy="-2" r="16"><stop offset="0" stop-color="#fff" stop-opacity="0.10"/><stop offset="0.7" stop-color="#000" stop-opacity="0"/><stop offset="1" stop-color="#000" stop-opacity="0.15"/></radialGradient><radialGradient id="shb" gradientUnits="userSpaceOnUse" cx="4" cy="20" r="22"><stop offset="0" stop-color="#fff" stop-opacity="0.08"/><stop offset="0.6" stop-color="#000" stop-opacity="0"/><stop offset="1" stop-color="#000" stop-opacity="0.2"/></radialGradient></defs><g transform="translate(787.2 204) scale(1.0)">
<g fill="#24a198"><ellipse cx="9" cy="24" rx="15" ry="12"/><ellipse cx="19" cy="21" rx="8" ry="12"/><ellipse cx="-1" cy="26" rx="9" ry="10"/><path d="M-7 19L-14.5 22L-7 25.5Z M-5 30.5L-10.5 34L-2 35.5Z"/></g><g fill="url(#shb)"><ellipse cx="9" cy="24" rx="15" ry="12"/><ellipse cx="19" cy="21" rx="8" ry="12"/><ellipse cx="-1" cy="26" rx="9" ry="10"/><path d="M-7 19L-14.5 22L-7 25.5Z M-5 30.5L-10.5 34L-2 35.5Z"/></g>
<g fill="#24a198"><ellipse cx="0" cy="0" rx="14" ry="13.8"/><path d="M7.5 -8L15.7 -13.5L13.2 -1.5Z"/></g><g fill="url(#shd)"><ellipse cx="0" cy="0" rx="14" ry="13.8"/><path d="M7.5 -8L15.7 -13.5L13.2 -1.5Z"/></g>
<ellipse cx="-5" cy="3" rx="3" ry="3.5" fill="#17807a"/>
</g><g transform="translate(757.8 224.9) scale(1.0)">
<g fill="#f0ee00"><ellipse cx="9" cy="24" rx="15" ry="12"/><ellipse cx="19" cy="21" rx="8" ry="12"/><ellipse cx="-1" cy="26" rx="9" ry="10"/><path d="M-7 19L-14.5 22L-7 25.5Z M-5 30.5L-10.5 34L-2 35.5Z"/></g><g fill="url(#shb)"><ellipse cx="9" cy="24" rx="15" ry="12"/><ellipse cx="19" cy="21" rx="8" ry="12"/><ellipse cx="-1" cy="26" rx="9" ry="10"/><path d="M-7 19L-14.5 22L-7 25.5Z M-5 30.5L-10.5 34L-2 35.5Z"/></g>
<g fill="#f0ee00"><ellipse cx="0" cy="0" rx="14" ry="13.8"/><path d="M7.5 -8L15.7 -13.5L13.2 -1.5Z"/></g><g fill="url(#shd)"><ellipse cx="0" cy="0" rx="14" ry="13.8"/><path d="M7.5 -8L15.7 -13.5L13.2 -1.5Z"/></g>
<ellipse cx="-5" cy="3" rx="3" ry="3.5" fill="#b8b400"/>
</g><g transform="translate(814.1 224.9) scale(1.0)">
<g fill="#f00000"><ellipse cx="9" cy="24" rx="15" ry="12"/><ellipse cx="19" cy="21" rx="8" ry="12"/><ellipse cx="-1" cy="26" rx="9" ry="10"/><path d="M-7 19L-14.5 22L-7 25.5Z M-5 30.5L-10.5 34L-2 35.5Z"/></g><g fill="url(#shb)"><ellipse cx="9" cy="24" rx="15" ry="12"/><ellipse cx="19" cy="21" rx="8" ry="12"/><ellipse cx="-1" cy="26" rx="9" ry="10"/><path d="M-7 19L-14.5 22L-7 25.5Z M-5 30.5L-10.5 34L-2 35.5Z"/></g>
<g fill="#f00000"><ellipse cx="0" cy="0" rx="14" ry="13.8"/><path d="M7.5 -8L15.7 -13.5L13.2 -1.5Z"/></g><g fill="url(#shd)"><ellipse cx="0" cy="0" rx="14" ry="13.8"/><path d="M7.5 -8L15.7 -13.5L13.2 -1.5Z"/></g>
<ellipse cx="-5" cy="3" rx="3" ry="3.5" fill="#a00000"/>
</g><g transform="translate(782.3 245.7) scale(1.04)">
<g fill="#0000f0"><ellipse cx="9" cy="24" rx="15" ry="12"/><ellipse cx="19" cy="21" rx="8" ry="12"/><ellipse cx="-1" cy="26" rx="9" ry="10"/><path d="M-7 19L-14.5 22L-7 25.5Z M-5 30.5L-10.5 34L-2 35.5Z"/></g><g fill="url(#shb)"><ellipse cx="9" cy="24" rx="15" ry="12"/><ellipse cx="19" cy="21" rx="8" ry="12"/><ellipse cx="-1" cy="26" rx="9" ry="10"/><path d="M-7 19L-14.5 22L-7 25.5Z M-5 30.5L-10.5 34L-2 35.5Z"/></g>
<g fill="#0000f0"><ellipse cx="0" cy="0" rx="14" ry="13.8"/><path d="M7.5 -8L15.7 -13.5L13.2 -1.5Z"/></g><g fill="url(#shd)"><ellipse cx="0" cy="0" rx="14" ry="13.8"/><path d="M7.5 -8L15.7 -13.5L13.2 -1.5Z"/></g>
<ellipse cx="-5" cy="3" rx="3" ry="3.5" fill="#0000a0"/>
</g><g stroke="#f4f4f4" stroke-width="1.15" fill="none" stroke-linecap="square">
<path d="M1058.6 21.4V9.8H1070.8V21.4M1058.6 20.6H1070.8M1062.2 10V14.5Q1062 17 1059.8 18.2M1066 10V16.5Q1066 17.6 1067.2 17.6H1070.6"/>
<path d="M1072.6 11H1077.2Q1076 17 1072.6 21.3M1073.2 13.6Q1075.5 17.5 1078 21M1077.9 13.6H1084.4M1082.2 9V21.2Q1082.2 22 1080.8 21.8M1079.3 16.2L1080.4 18.4"/>
<path d="M1090.5 8.8L1088.8 11M1090 10H1094M1088.3 11.6H1099.5V14.2H1088.3ZM1087.2 15.3H1101M1093.8 15.3Q1092 17.5 1087.8 18.6M1090.5 17.5Q1094.5 17 1095 19.5Q1095 22.5 1092.5 21.8M1094.7 18.5L1088.5 22M1096.2 16.5Q1098 20 1101.2 21.8M1100.5 16.3L1097.5 18.6"/>
<path d="M1109.6 8.8V21Q1109.6 22.2 1108 21.8M1106.3 13L1103.6 19.6M1112.6 12.8Q1114.8 15.6 1116 19"/>
<path d="M1117.6 13.4H1131M1122.8 9Q1122.6 17.8 1117.6 22M1125.2 13.8V20.4Q1125.2 21.4 1126.4 21.4H1130.8Q1131.4 21.4 1131.4 19.4M1127.3 9.3L1128.8 11.3M1130 14.8Q1128.4 17.4 1125.6 18.6"/>
</g></svg>
</body></html>
